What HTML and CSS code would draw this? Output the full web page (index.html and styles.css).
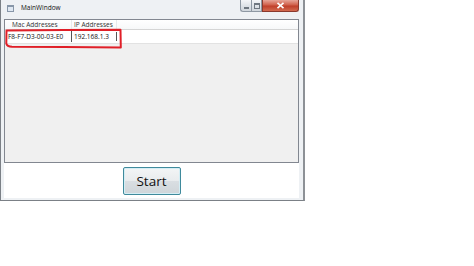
FILE: index.html
```html
<!DOCTYPE html>
<html lang="en">
<head>
  <meta charset="UTF-8">
  <title>MainWindow</title>
  <link rel="stylesheet" href="styles.css">
</head>
<body>
  <div class="window">
    <div class="titlebar">
      <span class="app-icon"></span>
      <span class="title">MainWindow</span>
      <div class="caption-buttons">
        <div class="cap-btn cap-min"><span class="glyph-min"></span></div>
        <div class="cap-btn cap-max"><span class="glyph-max"></span></div>
        <div class="cap-btn cap-close">
          <svg width="9" height="7" viewBox="0 0 9 7"><path d="M1.5 0.8 L7.5 6.2 M7.5 0.8 L1.5 6.2" stroke="#fff" stroke-width="1.6"/></svg>
        </div>
      </div>
    </div>
    <div class="client">
      <div class="listview">
        <div class="lv-header">
          <div class="col col-mac">Mac Addresses</div>
          <div class="col col-ip">IP Addresses</div>
          <div class="col col-fill"></div>
        </div>
        <div class="lv-row">
          <div class="col col-mac">F8-F7-D3-00-03-E0</div>
          <div class="col col-ip">192.168.1.3</div>
        </div>
        <div class="lv-empty"></div>
        <!-- hand drawn mark around the row -->
        <svg class="annotation" width="120" height="22" viewBox="0 0 120 22">
          <path d="M2.5 2.5 L60 2 L116.5 1.8 L116.8 19.5 L60 19 L8 18.8 Q3 18.6 2.3 15.5 Z" fill="none" stroke="#e01f28" stroke-width="2" stroke-linejoin="round"/>
        </svg>
      </div>
      <div class="button-bar">
        <button class="start-btn">Start</button>
      </div>
    </div>
  </div>
</body>
</html>
```

FILE: styles.css
```css
body {
  margin: 0;
  background: #fff;
  font-family: "Open Sans", "DejaVu Sans", sans-serif;
}
.window {
  width: 305px;
  height: 201px;
  box-sizing: border-box;
  padding: 0 4px 2px 3px;
  background: #eef1f4;
  border: 1px solid #7b8086;
  border-top: none;
  border-right: 2px solid #8d9196;
}
.titlebar {
  height: 19px;
  display: flex;
  align-items: flex-start;
  position: relative;
}
.app-icon {
  width: 5px;
  height: 4px;
  margin: 5px 0 0 3px;
  border: 1px solid #8796a8;
  border-top-width: 2px;
  background: #dfe8f2;
}
.title {
  margin: 3px 0 0 7px;
  font-size: 6.5px;
  line-height: 10px;
  color: #111;
}
.caption-buttons {
  margin-left: auto;
  display: flex;
  height: 12px;
}
.cap-btn {
  height: 12px;
  box-sizing: border-box;
  border: 1px solid #8e98a3;
  border-top: none;
  display: flex;
  align-items: center;
  justify-content: center;
}
.cap-min,
.cap-max {
  width: 11px;
  background: linear-gradient(#f4f6f8, #dde2e7 55%, #d0d6dc);
}
.cap-min {
  border-radius: 0 0 0 3px;
  border-right: none;
}
.glyph-min {
  width: 5px;
  height: 2px;
  margin-top: 4px;
  background: #6e7780;
}
.glyph-max {
  width: 4px;
  height: 3px;
  border: 1px solid #6e7780;
  border-top-width: 2px;
}
.cap-close {
  width: 37px;
  border-color: #8a3a2e;
  border-radius: 0 0 3px 0;
  background: linear-gradient(#e7a598, #d0604b 45%, #c0402b 55%, #d26a4f);
}
.client {
  height: 179px;
  background: #fff;
  display: flex;
  flex-direction: column;
}
.listview {
  height: 144px;
  box-sizing: border-box;
  border: 1px solid #828790;
  display: flex;
  flex-direction: column;
  position: relative;
  font-size: 6.5px;
  color: #111;
}
.lv-header {
  height: 10px;
  box-sizing: border-box;
  display: flex;
  border-bottom: 1px solid #d5d5d5;
  background: linear-gradient(#fff, #f7f8f9);
  line-height: 9px;
  color: #333;
}
.lv-header .col {
  border-right: 1px solid #e8eaec;
}
.lv-header .col-mac {
  padding-left: 7px;
}
.lv-header .col-ip {
  padding-left: 2px;
}
.lv-header .col-fill {
  flex: 1;
  border-right: none;
}
.col-mac {
  width: 67px;
  box-sizing: border-box;
}
.col-ip {
  width: 45px;
  box-sizing: border-box;
}
.lv-row {
  height: 13px;
  display: flex;
  align-items: center;
  background: #fff;
  border-bottom: 1px solid #e2e2e2;
}
.lv-row .col-mac {
  padding-left: 3px;
  border-right: 1px solid #555;
  height: 11px;
  line-height: 11px;
}
.lv-row .col-ip {
  padding-left: 2px;
  border-right: 1px solid #555;
  height: 9px;
  line-height: 9px;
}
.lv-empty {
  flex: 1;
  background: #f0f0f0;
}
.annotation {
  position: absolute;
  left: -1px;
  top: 8px;
}
.button-bar {
  flex: 1;
  display: flex;
  align-items: center;
  justify-content: center;
}
.start-btn {
  width: 58px;
  height: 28px;
  padding: 0;
  margin-top: 1px;
  font-family: "Open Sans", "DejaVu Sans", sans-serif;
  font-size: 13.5px;
  color: #111;
  border: 1px solid #3f8a9c;
  border-radius: 2px;
  box-shadow: inset 0 0 0 1px #d4eef5;
  background: linear-gradient(#f3f5f6, #e9ecee 48%, #d9dee2 52%, #cfd5d9);
}
```
